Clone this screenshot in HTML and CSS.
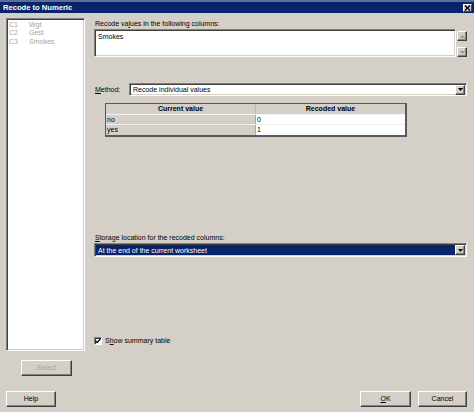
FILE: index.html
```html
<!DOCTYPE html>
<html>
<head>
<meta charset="utf-8">
<link rel="stylesheet" href="styles.css">
</head>
<body>
<div class="window">
  <div class="titlebar">
    <span class="title">Recode to Numeric</span>
    <span class="close"><svg width="7" height="6" viewBox="0 0 7 6"><path d="M1 0.5 L6 5.5 M6 0.5 L1 5.5" stroke="#000" stroke-width="1.4"/></svg></span>
  </div>
  <div class="content">
    <div class="main">
      <div class="left">
        <div class="listbox">
          <div class="item"><span class="cn">C1</span><span>Wgt</span></div>
          <div class="item"><span class="cn">C2</span><span>Gest</span></div>
          <div class="item"><span class="cn">C3</span><span>Smokes</span></div>
        </div>
        <div class="btn select">Select</div>
      </div>
      <div class="right">
        <div class="label first">Recode va<u>l</u>ues in the following columns:</div>
        <div class="colrow">
          <div class="textbox">Smokes</div>
          <div class="scroll">
            <div class="sbtn"><svg width="5" height="3" viewBox="0 0 5 3"><path d="M0 3 L2.5 0 L5 3Z" fill="#9a9a9a"/></svg></div>
            <div class="sbtn"><svg width="5" height="3" viewBox="0 0 5 3"><path d="M0 0 L2.5 3 L5 0Z" fill="#9a9a9a"/></svg></div>
          </div>
        </div>
        <div class="methodrow">
          <div class="mlabel"><u>M</u>ethod:</div>
          <div class="combo method">
            <div class="ctext">Recode individual values</div>
            <div class="arrow"><svg width="5" height="3" viewBox="0 0 5 3"><path d="M0 0 L2.5 3 L5 0Z" fill="#000"/></svg></div>
          </div>
        </div>
        <div class="grid">
          <div class="ghead">
            <div class="gc">Current value</div>
            <div class="gc">Recoded value</div>
          </div>
          <div class="grow">
            <div class="gk">no</div>
            <div class="gv">0</div>
          </div>
          <div class="grow last">
            <div class="gk">yes</div>
            <div class="gv">1</div>
          </div>
        </div>
        <div class="label storage"><u>S</u>torage location for the recoded columns:</div>
        <div class="combo selected">
          <div class="ctext">At the end of the current worksheet</div>
          <div class="arrow"><svg width="5" height="3" viewBox="0 0 5 3"><path d="M0 0 L2.5 3 L5 0Z" fill="#000"/></svg></div>
        </div>
        <div class="checkrow">
          <span class="check"><svg width="6" height="6" viewBox="0 0 6 6"><path d="M0.5 2.8 L2.2 4.6 L5.5 0.8" stroke="#000" stroke-width="1.3" fill="none"/></svg></span>
          <span>S<u>h</u>ow summary table</span>
        </div>
      </div>
    </div>
    <div class="footer">
      <div class="btn help">Help</div>
      <div class="spacer"></div>
      <div class="btn ok"><u>O</u>K</div>
      <div class="btn cancel">Cancel</div>
    </div>
  </div>
</div>
</body>
</html>
```

FILE: styles.css
```css
html, body {
  margin: 0;
  padding: 0;
}
body {
  font-family: "Liberation Sans", Arial, sans-serif;
  font-size: 7px;
  color: #000;
  background: #d4d0c8;
}
u {
  text-decoration: underline;
  text-underline-offset: 1px;
}
.window {
  width: 474px;
  height: 412px;
  display: flex;
  flex-direction: column;
  background: #d4d0c8;
  overflow: hidden;
}
.titlebar {
  height: 11px;
  border-top: 2px solid #5b6e9e;
  background: #0a246a;
  display: flex;
  align-items: center;
  justify-content: space-between;
  padding: 0 2px 0 3px;
}
.title {
  color: #fff;
  font-weight: bold;
  font-size: 7.6px;
  line-height: 11px;
}
.close {
  width: 9px;
  height: 8px;
  box-sizing: border-box;
  background: #d4d0c8;
  border: 1px solid;
  border-color: #fff #404040 #404040 #fff;
  display: flex;
  align-items: center;
  justify-content: center;
}
.content {
  flex: 1;
  display: flex;
  flex-direction: column;
  padding: 5px 7px 5px 6px;
}
.main {
  flex: 1;
  display: flex;
  gap: 9px;
}
.left {
  width: 80px;
  display: flex;
  flex-direction: column;
}
.listbox {
  height: 333px;
  box-sizing: border-box;
  background: #fff;
  border: 1px solid;
  border-color: #808080 #fff #fff #808080;
  box-shadow: inset 1px 1px #404040, inset -1px -1px #d4d0c8;
  padding: 2px 1px 0 2px;
}
.item {
  display: flex;
  line-height: 8.4px;
  color: #a3a3a3;
}
.cn {
  width: 20px;
}
.btn {
  box-sizing: border-box;
  height: 16px;
  background: #d4d0c8;
  border: 1px solid;
  border-color: #fff #404040 #404040 #fff;
  box-shadow: inset -1px -1px #808080;
  display: flex;
  align-items: center;
  justify-content: center;
  line-height: 10px;
}
.select {
  width: 51px;
  margin: 9px 0 0 15px;
  color: #a3a3a3;
}
.right {
  flex: 1;
  display: flex;
  flex-direction: column;
}
.label {
  line-height: 10px;
  padding-left: 1px;
}
.label.first {
  padding-top: 1px;
}
.colrow {
  display: flex;
  height: 28px;
}
.textbox {
  width: 362px;
  box-sizing: border-box;
  background: #fff;
  border: 1px solid;
  border-color: #808080 #fff #fff #808080;
  box-shadow: inset 1px 1px #404040, inset -1px -1px #d4d0c8;
  padding: 2px 2px 0 3px;
  line-height: 9px;
}
.scroll {
  width: 10px;
  margin-left: 1px;
  padding-top: 2px;
  display: flex;
  flex-direction: column;
  justify-content: space-between;
}
.sbtn {
  height: 10px;
  box-sizing: border-box;
  background: #d4d0c8;
  border: 1px solid;
  border-color: #fff #404040 #404040 #fff;
  box-shadow: inset -1px -1px #808080;
  display: flex;
  align-items: center;
  justify-content: center;
}
.methodrow {
  display: flex;
  margin-top: 26px;
}
.mlabel {
  width: 34px;
  padding-left: 1px;
  line-height: 13px;
}
.combo {
  height: 13px;
  box-sizing: border-box;
  background: #fff;
  border: 1px solid;
  border-color: #808080 #fff #fff #808080;
  box-shadow: inset 1px 1px #404040, inset -1px -1px #d4d0c8;
  display: flex;
  align-items: center;
  padding: 1px;
}
.combo.method {
  flex: 1;
}
.ctext {
  flex: 1;
  padding-left: 2px;
  line-height: 9px;
  align-self: stretch;
  display: flex;
  align-items: center;
}
.combo.selected {
  height: 14px;
}
.combo.selected .ctext {
  background: #0a246a;
  color: #fff;
}
.arrow {
  width: 10px;
  height: 10px;
  box-sizing: border-box;
  background: #d4d0c8;
  border: 1px solid;
  border-color: #fff #404040 #404040 #fff;
  box-shadow: inset -1px -1px #808080;
  display: flex;
  align-items: center;
  justify-content: center;
}
.grid {
  width: 302px;
  margin: 7px 0 0 11px;
  box-sizing: border-box;
  border: 1px solid #5a5a5a;
  border-bottom-width: 2px;
  border-right-width: 2px;
}
.ghead {
  display: flex;
  height: 10px;
  border-bottom: 1px solid #f4f4f4;
}
.gc {
  flex: 1;
  text-align: center;
  font-weight: bold;
  line-height: 10px;
}
.gc + .gc {
  border-left: 1px solid #bdbab2;
}
.grow {
  display: flex;
  height: 9px;
  border-bottom: 1px solid #eeeeee;
}
.grow.last {
  border-bottom: none;
  height: 10px;
}
.gk {
  flex: 1;
  background: #d4d0c8;
  padding-left: 1px;
  line-height: 9px;
}
.gv {
  flex: 1;
  background: #fff;
  border-left: 1px solid #a8a8a8;
  padding-left: 1px;
  line-height: 9px;
}
.label.storage {
  margin-top: 96px;
}
.checkrow {
  display: flex;
  align-items: center;
  gap: 3px;
  margin-top: 80px;
  line-height: 8px;
}
.check {
  width: 8px;
  height: 8px;
  box-sizing: border-box;
  background: #fff;
  border: 1px solid;
  border-color: #808080 #fff #fff #808080;
  box-shadow: inset 1px 1px #404040;
  display: flex;
  align-items: center;
  justify-content: center;
}
.footer {
  display: flex;
  height: 16px;
}
.spacer {
  flex: 1;
}
.help {
  width: 50px;
}
.ok {
  width: 51px;
  margin-right: 7px;
}
.cancel {
  width: 49px;
}
```
